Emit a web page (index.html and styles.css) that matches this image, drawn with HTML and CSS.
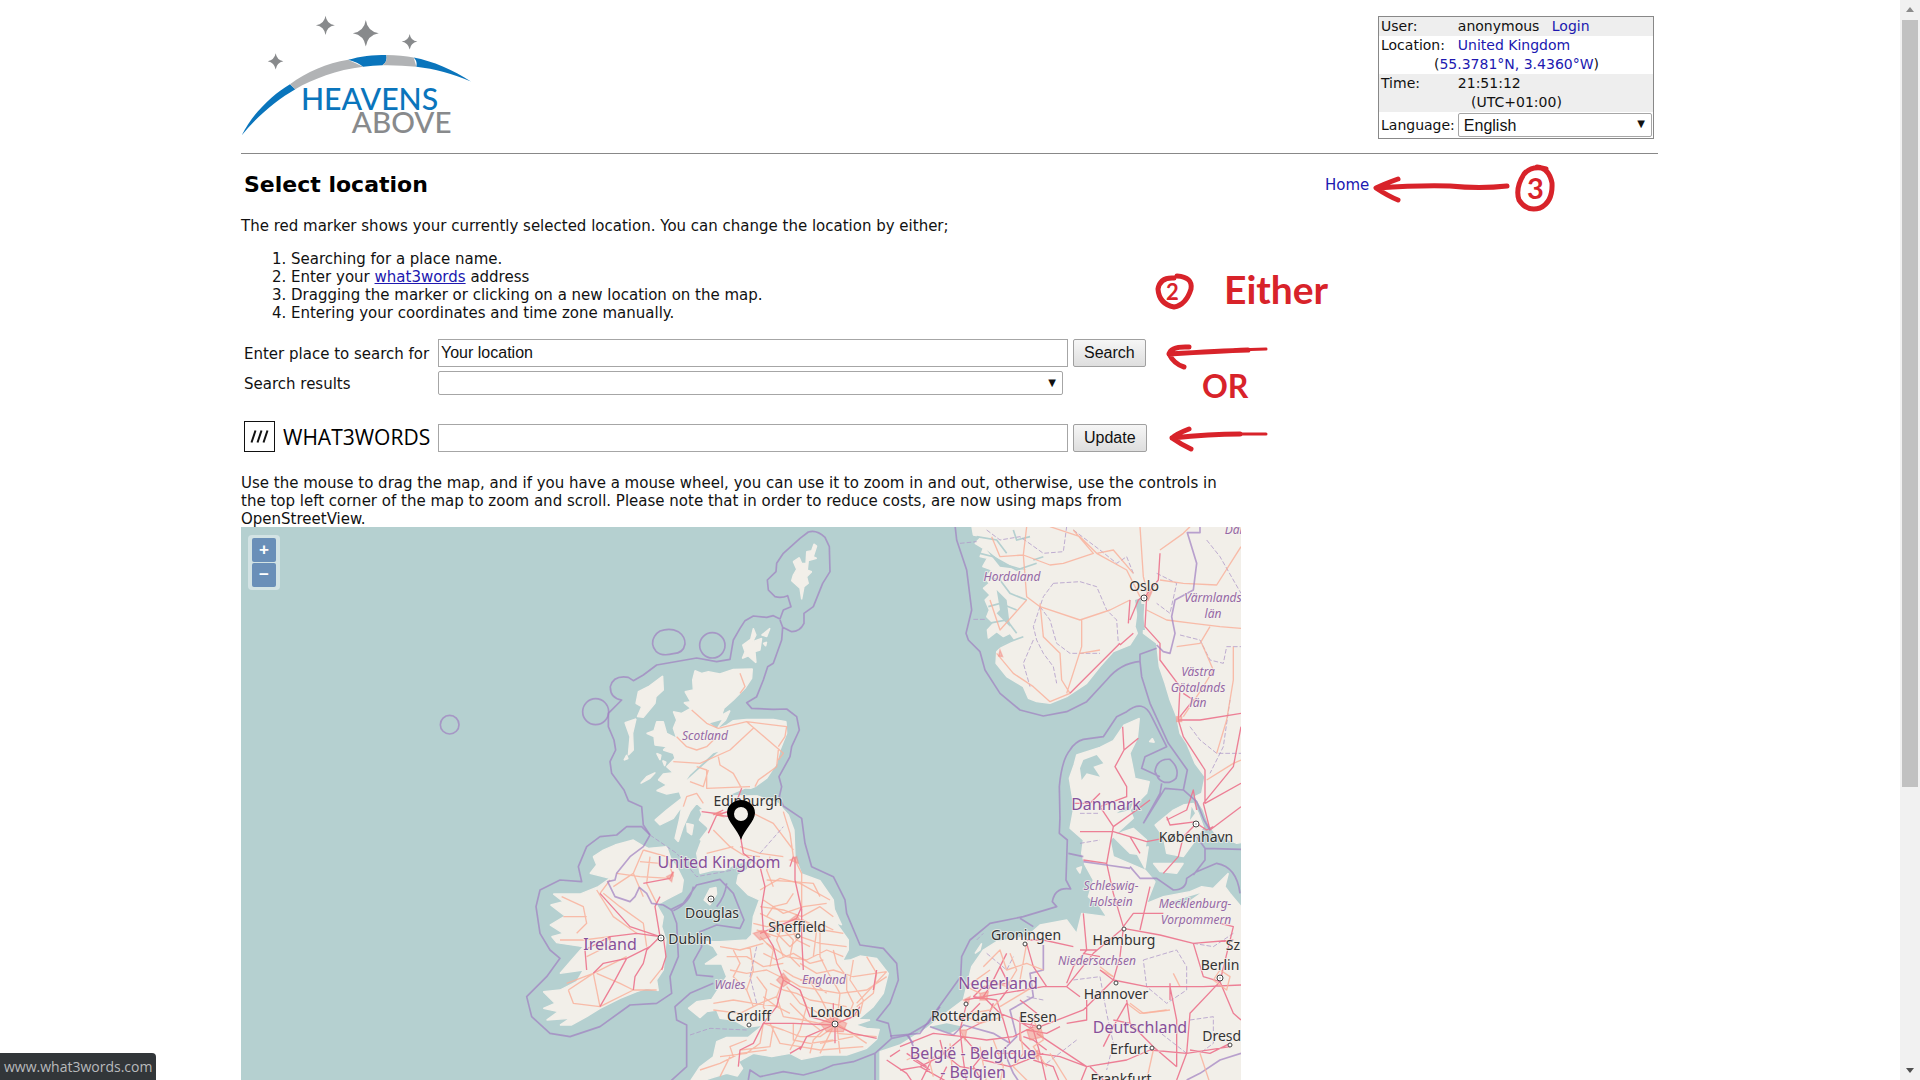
FILE: index.html
```html
<!DOCTYPE html>
<html lang="en">
<head>
<meta charset="utf-8">
<title>Select location - Heavens-Above</title>
<link rel="stylesheet" href="styles.css">
</head>
<body>
<div class="viewport">
<div class="page">
  <header class="header">
    <svg class="logo" viewBox="33 24 700 400" role="img" aria-label="Heavens Above">
      <g fill="#888a8c">
        <path d="M287 47Q290 72 315 76Q290 80 287 105Q283 80 258 76Q283 72 287 47Z"/>
        <path d="M408 60Q413 94 447 100Q413 106 408 140Q403 106 369 100Q403 94 408 60Z"/>
        <path d="M540 102Q543 122 563 125Q543 129 540 149Q536 129 516 125Q536 122 540 102Z"/>
        <path d="M137 160Q140 180 160 184Q140 188 137 209Q133 188 113 184Q133 180 137 160Z"/>
      </g>
      <path fill="#0a75bc" d="M35 407C65 345 125 285 180 253L196 268C140 300 80 350 35 407Z"/>
      <path fill="#b1b3b5" d="M180 253C230 218 290 190 355 180L400 201C320 210 250 238 196 268Z"/>
      <path fill="#0a75bc" d="M355 180C390 168 430 165 470 165Q474 185 458 196Q430 196 400 201Q385 188 355 180Z"/>
      <path fill="#b1b3b5" d="M470 165C500 165 528 168 552 173L560 201Q510 195 458 196Q474 185 470 165Z"/>
      <path fill="#0a75bc" d="M552 173C610 184 670 210 724 245C670 222 615 207 560 201Q564 185 552 173Z"/>
      <text x="213" y="330" font-size="91" fill="#0a75bc">HEAVENS</text>
      <text x="366" y="401" font-size="89" fill="#888a8c">ABOVE</text>
    </svg>
    <table class="info">
      <tr class="shade"><th>User:</th><td>anonymous <a class="login" href="#login">Login</a></td></tr>
      <tr><th>Location:</th><td><a href="#location">United Kingdom</a></td></tr>
      <tr><td class="centre" colspan="2">(<a href="#location">55.3781°N, 3.4360°W</a>)</td></tr>
      <tr class="shade"><th>Time:</th><td>21:51:12</td></tr>
      <tr class="shade"><td class="centre" colspan="2">(UTC+01:00)</td></tr>
      <tr><th><label for="lang">Language:</label></th><td><span class="drop"><select id="lang"><option>English</option></select></span></td></tr>
    </table>
  </header>

  <div class="columns">
    <main class="content">
      <h1>Select location</h1>
      <p class="intro">The red marker shows your currently selected location. You can change the location by either;</p>
      <ol class="ways">
        <li>Searching for a place name.</li>
        <li>Enter your <a href="#w3w">what3words</a> address</li>
        <li>Dragging the marker or clicking on a new location on the map.</li>
        <li>Entering your coordinates and time zone manually.</li>
      </ol>

      <form class="search">
        <label for="place">Enter place to search for</label>
        <input id="place" type="text" value="Your location">
        <button type="button">Search</button>
        <label for="results">Search results</label>
        <span class="drop results"><select id="results"><option></option></select></span>
        <span></span>
        <label class="w3w" for="w3w">
          <svg class="w3w-mark" viewBox="0 0 31 31" aria-hidden="true"><rect x=".5" y=".5" width="30" height="30" fill="#fff" stroke="#111"/><path d="M7.500 21.500L11.500 9.500M13.500 21.500L17.500 9.500M19.500 21.500L23.500 9.500" stroke="#111" stroke-width="2" fill="none"/></svg>
          <span>WHAT3WORDS</span>
        </label>
        <input class="words" id="w3w" type="text">
        <button class="words" type="button">Update</button>
      </form>

      <p class="help">Use the mouse to drag the map, and if you have a mouse wheel, you can use it to zoom in and out, otherwise, use the controls in the top left corner of the map to zoom and scroll. Please note that in order to reduce costs, are now using maps from OpenStreetView.</p>

      <div class="map">
        <svg class="tiles" viewBox="241 527 1000 600" preserveAspectRatio="xMinYMin slice" role="img" aria-label="Map of north west Europe">
          <g transform="translate(500 520) scale(.33333)">
            <!-- Great Britain, north -->
            <g class="land">
              <path d="M585 452L605 460L625 455L660 462L700 448L757 447L755 475L735 505L700 540L672 565L665 585L690 572L677 600L648 628L680 615L700 602L740 598L820 598L858 605L860 640L840 690L830 730L800 775L765 800L735 812L765 825L800 838L835 850L860 880L875 930L600 960L626 925L598 900L612 870L590 850L570 875L550 920L535 965L525 955L538 900L545 860L520 895L480 915L465 900L500 870L545 835L538 815L500 822L470 812L500 795L475 780L490 762L520 758L500 740L525 715L520 700L490 690L500 680L465 675L462 650L440 640L462 632L470 605L490 605L500 640L530 655L520 625L530 600L520 575L545 580L572 565L552 548L572 545L555 515L580 510L578 480Z"/>
              <path d="M488 468L490 510L468 530L465 550L430 592L412 590L425 560L408 550L415 515L445 500Z"/>
              <path d="M375 608L408 597L398 640L400 690L385 705L390 650ZM372 720L380 705L384 716ZM422 790L440 770L466 758L450 775ZM470 700L483 705L480 720ZM488 722L498 726L494 738Z"/>
              <path d="M728 375L752 358L760 325L768 345L758 365L785 355L780 390L765 395L768 428L745 408L727 415L735 395ZM790 370L800 366L797 378ZM785 345L810 325L800 350Z"/>
              <path d="M880 165L890 148L880 125L898 113L905 130L918 130L920 95L935 92L942 72L950 78L940 110L950 115L925 122L922 150L935 155L920 170L925 190L912 200L905 238L900 205L875 182Z"/>
            </g>
            <g class="sea"><path d="M655 695L560 780L550 795L570 765L640 700ZM650 625L630 610L665 600ZM690 825L735 806L770 808L790 825L740 826Z"/></g>
            <g transform="translate(0 810)">
              <g class="land">
                <path d="M600 60L830 40L865 75L882 120L885 200L905 252L960 272L1000 330L1003 358L1025 405L1008 398L1045 450L1045 480L1028 512L1050 510L1080 498L1130 505L1165 550L1150 610L1120 650L1075 688L1110 690L1065 705L1100 715L1138 718L1130 748L1100 775L1040 795L970 795L905 808L870 790L815 800L760 790L715 815L728 835L712 858L680 850L640 862L600 875L570 875L600 830L640 800L650 755L680 742L745 742L790 705L740 712L700 690L660 685L650 660L620 665L600 683L565 655L590 635L635 628L660 590L680 560L665 522L615 522L655 495L640 470L610 455L660 455L740 450L755 435L760 380L778 330L745 315L710 280L715 255L740 240L765 205L700 225L675 240L640 240L600 250L590 190L605 150L630 130Z"/>
                <path d="M400 150L425 165L445 175L500 170L512 205L535 240L550 270L545 305L500 328L470 345L490 380L485 410L498 450L490 540L470 570L475 602L440 595L410 605L360 625L300 655L260 680L215 705L180 705L210 685L140 690L175 665L130 655L165 640L130 605L180 600L230 575L250 540L180 550L215 510L250 470L170 458L155 440L190 430L150 405L195 378L152 345L190 335L160 312L240 312L295 290L330 265L270 250L290 225L280 200L310 180L345 165Z"/>
                <path d="M612 330L630 296L648 292L650 312L630 345ZM560 100L580 105L575 135L562 125Z"/>
              </g>
              <!-- Roads of the British Isles -->
              <g class="minor">
                <path d="M720 -350L735 -310L720 -290M575 -240L620 -200L655 -185L740 -205L850 -110L835 -90M530 -160L560 -130L590 -120L620 -130L650 -160M520 -85L600 -80L690 -120L760 -185M590 -70L620 -60L620 -5L750 -10M655 -100L660 -75L700 -50L725 -5M570 -25L610 -10L625 -60M550 50L560 20L590 10L610 40M835 -120L830 -70L775 -30L765 -10M740 -205L860 -190L855 -160L835 -130"/>
                <path d="M640 120L690 170L730 195L780 200M740 60L820 100L880 180M720 170L780 190L850 200M800 270L880 275L940 280L960 320M790 330L850 370L910 350L980 340M620 190L700 170M850 65L870 130L880 200L905 250L905 360"/>
                <path d="M780 300L840 265L900 280L990 330M780 350L850 360L905 380L960 350L1000 380M780 370L830 395L910 390L970 420L1030 430M830 430L870 470L900 440L960 460L1040 470M800 460L860 500L920 510L980 480L1030 500M660 470L720 480L790 460M680 500L740 500L790 530L850 520M690 540L740 550L800 540L860 570M700 480L720 520L700 560L740 600L760 650M640 640L700 630L760 640L840 650M640 660L720 670L780 640L830 620M850 560L900 590L960 600L1020 610L1100 600L1160 560M900 520L950 550L1000 540L1060 560L1160 545M920 560L960 620L1000 700M980 540L1020 610L1010 700M1060 510L1050 570L1090 630L1080 670L1010 700M1100 500L1130 550L1120 610L1070 650M1160 545L1070 640M850 570L830 620L850 680L910 690L960 700M860 590L900 640L940 660L1000 700M790 700L850 720L900 740L960 740L1010 705M790 700L780 760L740 790L660 800M810 700L840 760L900 770L960 780L1090 770M820 710L810 770L720 780M1005 700L960 790M1010 700L1020 790M1010 700L1100 760M1010 730L1130 740M960 760L1060 740M600 840L660 820L720 790L800 780M660 860L690 800M870 780L900 720L920 650L900 600M770 560L800 600L790 650L810 690M750 470L760 540L740 600M940 500L950 420L910 390M980 610L930 570L900 570M1000 420L960 400L960 500L980 540"/>
                <path d="M430 180L400 250L340 290M430 180L500 200L520 260M350 250L420 260L510 265M420 215L480 220M450 200L440 280L470 340M400 250L430 320M290 300L340 380L410 430M185 320L250 350L260 400L230 430M180 450L250 450L330 440M190 380L260 380M330 270L300 310M330 440L300 480L260 500M205 600L280 550L380 500M205 600L220 640L300 650M280 550L300 650L400 600L470 600M280 550L200 580M400 600L360 580L290 550M440 470L430 400L360 350L310 310M450 580L490 530"/>
                <path d="M810 200L800 240L820 290M870 400L890 450L930 470M850 400L830 450L850 500M760 400L800 410L880 400M770 420L830 440L900 430M780 440L820 480L810 530"/>
                <path d="M800 380L820 350L860 340L880 310M820 410L850 420L880 450L870 500L900 530M790 490L830 510L880 490L930 520L970 510M850 540L880 560L930 580L960 560M810 580L850 600L890 610L930 630L990 640L1040 650M870 640L920 690L960 720M880 700L880 750L930 760L1000 750M1040 600L1060 640L1040 690M930 790L940 750L970 720M1000 480L1010 520L1040 560L1040 600M790 620L830 650L870 670M700 800L690 770L740 750"/>
              </g>
              <g class="major">
                <path d="M605 65L660 72L700 60L725 -5M625 130L650 75L690 80L720 130L730 190L780 230L795 290L785 350L790 420L820 470L835 530L850 570L900 600L930 680L1000 700M850 570L830 650L790 700L760 760L720 780L715 830M885 200L885 270L905 360L905 440L910 540M780 430L830 410L890 385L905 350M640 75L670 60M410 430L330 440L330 470M410 430L480 440M480 440L465 350L480 320M480 440L390 410L300 310M480 440L440 480L430 520L405 560L400 600M300 650L340 580L380 505L450 470M380 505L310 520L280 550M260 540L255 480L330 440M430 280L510 265L520 245M490 440L498 500L485 540M790 700L880 700L1000 705M900 780L920 740L1000 705M1005 705L1005 760M1005 705L1060 730L1130 745M870 790L905 770M1000 700L1000 640M1120 600L1130 540M880 200L870 230M1010 700L1060 680L1080 650"/>
              </g>
              <g class="towns">
                <path d="M760 430L790 420L810 440L780 450ZM830 570L850 550L870 575L850 590ZM960 700L1000 680L1040 700L1030 725L980 725ZM870 390L890 375L900 390ZM870 210L890 200L895 220ZM500 260L520 250L515 275ZM640 72L660 65L670 80Z"/>
              </g>
            </g>
          </g>

          <g transform="translate(900 520) scale(.33333)">
            <!-- Scandinavia -->
            <g class="land">
              <path d="M215 15L220 45L245 50L225 70L250 85L240 110L262 115L248 140L275 150L255 175L268 190L250 205L270 225L255 240L268 270L260 290L280 310L262 330L265 355L290 335L310 350L330 340L345 360L310 375L290 395L288 430L320 470L370 500L385 535L410 545L450 550L500 530L560 490L600 440L640 395L690 375L712 340L705 320L712 270L705 250L735 250L730 340L770 370L778 440L795 490L810 540L830 590L840 640L860 670L885 730L915 770L905 820L885 830L910 870L925 910L945 940L1010 970L1040 965V15Z"/>
              <path d="M522 735L530 705L600 682L640 662L672 615L718 595L712 655L690 700L705 775L748 785L740 820L690 870L700 895L655 935L630 960L640 1010L700 1035L735 1050L765 1085L740 1150L790 1130L870 1115L905 1100L940 1105L985 1060L975 1100L990 1120L1040 1180V1700H-60V1595L0 1575L80 1525L150 1470L190 1440L215 1340L250 1290L290 1265L380 1250L420 1215L500 1200L530 1240L545 1180L620 1190L600 1160L565 1130L580 1080L555 1035L545 1000L550 960L510 925L522 860L508 775Z"/>
              <path d="M640 950L670 935L700 925L740 960L730 1005L690 1000ZM765 915L820 870L850 855L880 850L895 880L910 920L890 955L850 1010L800 1000L790 950ZM760 1030L850 1030L830 1060L780 1055ZM748 665L757 655L763 667ZM705 990L745 980L735 1045ZM225 1300L245 1270L240 1290ZM530 1045L545 1040L540 1060Z"/>
            </g>
            <g class="sea">
              <path d="M550 720L590 705L610 730L580 740L600 770L560 760L545 780L540 745ZM720 330L705 240L722 235L735 330ZM290 280L330 320L320 240L290 210L300 270ZM260 90L310 130L380 150L300 140ZM280 1170H530L480 1185L400 1200ZM90 1520L150 1540L190 1520L140 1510ZM650 880L700 845L690 870ZM800 1150L900 1120L850 1155ZM875 860L885 880L870 900Z"/>
            </g>
            <path class="fjords" d="M230 50L290 60L320 100M240 100L280 110L350 150L410 130M255 170L300 180L330 220L380 240M265 260L300 250L350 270M265 310L320 300L350 340M290 385L330 365L370 350M340 30L350 60L390 50M400 120L430 110"/>
            <g class="admin">
              <path d="M260 30L300 60L360 50L430 100L490 95L500 20M460 190L540 185L590 200L620 270L650 300L655 370M460 190L430 230L400 320L410 360L430 400L460 440L470 490M420 260L450 300L470 370L510 400L600 400M520 30L600 90L650 130L680 110L700 160M400 360L370 430L390 500M770 160L830 190L810 280L770 250M840 345L900 360L930 420L970 430L980 380L1023 380M870 620L900 660L950 700L1023 700M920 60L960 110L1000 180L1023 220M990 540L970 680L930 760M540 880L600 880M230 1260L250 1240M540 970L600 960M430 1440L380 1430M730 1320L830 1290L860 1340L860 1410L800 1450L740 1400ZM520 1380L600 1370L620 1480L640 1570L620 1650M870 1500L940 1490L940 1570L900 1600M440 1630L530 1560M770 1530L860 1600M260 1300L320 1350L340 1310M880 1270L940 1280L1000 1240M180 70L230 65M220 298H260"/>
            </g>
            <g class="minor">
              <path d="M275 50L300 110L370 105L450 135L490 130L580 100L520 30M370 105L380 20M370 105L380 230L420 260L540 300L630 270L690 240M450 20L540 50L590 100L680 150L720 230M545 300L545 380L500 520M420 250L430 350L480 400L485 480L510 520M290 400L340 460L400 500L450 545L510 520M270 240L300 330L380 240M590 100L640 90L700 160M720 20L730 170L745 230M780 90L850 40L870 20M780 180L850 190L950 195L1023 80M740 270L800 300L880 310L960 320L1023 325M905 370L940 450L910 500L850 590M930 320L900 370L830 380M1000 380L1000 480L980 600L950 700M540 400L600 390M920 780L1000 730L1023 720M600 1350L640 1370M680 1450L720 1480L800 1470M820 1360L840 1400"/>
            </g>
            <g class="major">
              <path d="M735 230L775 180L780 100M740 230L735 320L780 370L780 420L840 500L835 600L850 650L915 750L915 850L1023 790M690 300L715 240L735 225M660 375L700 340M685 310L690 240M835 600L900 600L1023 580M840 590L880 540L850 520M910 850L930 930L1023 860M1023 620L1000 740L910 850M510 520L600 430L660 370M890 870L880 810L860 870L800 900M668 620L672 690L645 740L680 800L680 830L600 860L640 920L620 1030L550 1020M672 690L715 655M600 820L570 850L520 850M540 935L640 935L740 965L790 955M640 920L710 870L750 840M620 1030L640 1120L670 1220M640 935L690 950L720 1000M890 910L850 950L835 1010L790 1060M890 910L920 930L940 920M890 905L810 915L800 890"/>
            </g>
            <path class="border" d="M900 20V38H862L890 130L880 210L825 240L815 290L825 340L810 400L790 395L770 375M550 1025L620 1035L690 1045M430 1275L430 1350L390 1360L400 1430L330 1470L350 1550L310 1590L340 1660L360 1690M90 1520L160 1545L190 1515L280 1540L330 1570M1023 1600L960 1620L900 1660L860 1680"/>
            <!-- Roads of Germany and the Low Countries -->
            <g class="major">
              <path d="M670 1225L580 1300L500 1400L430 1400L250 1430L195 1440M670 1225L780 1245L880 1270L910 1370L960 1385M670 1225L660 1310L640 1380L740 1400L910 1400L1023 1395M640 1380L590 1430L550 1470L420 1520L370 1510M560 1440L560 1500L500 1510M680 1440L690 1510L750 1570L760 1580L830 1640M640 1380L600 1350M680 1450L640 1520L610 1580M960 1385L870 1480L860 1600L830 1680M960 1385L1000 1480L1023 1500M960 1385L1000 1220L960 1210M550 1180L560 1290L520 1340L500 1390M520 1280L430 1260L380 1260M380 1270L400 1340L440 1400M320 1300L270 1400L250 1430L300 1480L350 1500L400 1530L420 1600L440 1690M200 1450L180 1530L190 1620L200 1690M190 1550L100 1540L0 1580M190 1550L260 1560L340 1550L400 1520M190 1550L120 1610L60 1640M190 1550L250 1620L330 1640L430 1600M80 1640L20 1600M0 1650L60 1640L150 1690M100 1610L60 1690M330 1570L310 1500L290 1440L220 1430M390 1520L410 1480L360 1440M410 1600L480 1610L560 1640L540 1690M410 1540L500 1600L560 1640L680 1620L750 1590L860 1600L990 1580M830 1640L830 1500L810 1400M720 1230L750 1100M670 1220L700 1180L790 1180M810 1390V1440M500 1400L540 1430M880 1270L1000 1260M590 1290L540 1290M550 1300L600 1310M990 1570L930 1600L870 1590M570 1640L620 1690M690 1510L640 1500"/>
              <path d="M300 1340L330 1400L300 1440M220 1430L250 1400L320 1390M240 1450L200 1490L170 1500M280 1450L260 1500L200 1530M360 1490L360 1560L400 1600M380 1530L440 1540L480 1520M370 1550L400 1560L440 1590M120 1560L130 1600L180 1640L240 1650M140 1640L120 1680M260 1590L220 1640L250 1690M290 1600L350 1600M400 1620L460 1640L480 1690M40 1620L90 1650M-40 1620L20 1660L40 1690M-30 1610L0 1590"/>
            </g>
            <g class="minor">
              <path d="M250 1340L300 1290L320 1350L380 1330L430 1350M260 1380L320 1400L350 1350L330 1300M300 1460L350 1430L400 1400M210 1480L270 1470L300 1440M380 1270L360 1380M20 1620L80 1590L100 1670M150 1570L160 1690M240 1580L260 1690M280 1560L310 1640L300 1690M360 1530L370 1600L340 1640L390 1690M400 1500L430 1560L400 1580L440 1640M180 1480L240 1510L310 1490M690 1450L730 1480L810 1470M600 1340L640 1370M900 1600L930 1690M450 1600L500 1680M760 1590L740 1680M940 1380L960 1350L990 1370L980 1410ZM240 1420L200 1400L270 1350"/>
            </g>
            <g class="towns"><path d="M380 1530L420 1515L430 1550L390 1560ZM240 1420L265 1415L260 1440L240 1440ZM180 1530L200 1530L195 1560ZM395 1600L415 1590L415 1620ZM725 230L745 225L760 205L745 240ZM830 590L845 590L845 605L830 605ZM300 390L308 410L296 408ZM190 1440L210 1430L205 1450Z"/></g>
          </g>

          <!-- Territorial waters and borders -->
          <g class="border" transform="translate(500 520) scale(.33333)">
            <circle cx="-151" cy="614" r="28"/><circle cx="287" cy="575" r="39"/><circle cx="637" cy="376" r="38"/>
            <path d="M480 333Q510 322 535 335Q556 350 555 372Q550 400 520 401Q485 410 468 394Q450 372 463 350Q468 340 480 333Z"/>
            <path d="M450 945L430 915L425 860L385 842L372 810L335 760L330 725L347 690L342 660L325 620L325 580L365 540Q330 535 331 500Q340 465 385 472L400 482L430 465L470 435L590 414L650 425L690 418L700 360L720 325L735 302L760 288L800 292L820 287L840 297L850 270L873 260L863 227Q845 235 825 230L805 210L802 180L828 155L830 130L850 100L900 55L925 36Q950 28 975 52L988 80L990 155L968 190L940 260L912 280L912 310Q900 335 875 335L848 322L840 300M848 322L845 360L820 430L803 440L790 480L770 530L740 548L755 565L820 568L860 567L890 590L898 630L875 680L870 710L837 770L845 800L838 830L850 858L905 895L915 970L935 1040L1000 1070L1035 1140L1040 1180L1080 1275L1150 1285L1190 1330L1195 1380L1170 1450L1130 1500L1165 1510L1175 1555L1225 1545L1285 1510L1320 1460M1225 1545L1240 1580M1175 1555L1125 1600L1060 1625L1000 1635L965 1650L910 1665L850 1655L780 1670L750 1650L745 1680M1125 1600V1680"/>
            <path d="M450 945L425 920L380 920L350 945L300 950L260 980L235 1040L245 1085L180 1080L120 1110L108 1160L120 1240L150 1290L180 1315L140 1370L80 1430L95 1490L150 1540L210 1550L300 1520L390 1455L470 1450L515 1420L510 1370L535 1310L530 1210L515 1170L490 1155L455 1150L440 1120L418 1102L405 1130L390 1145L345 1130L323 1085L345 1080L350 1060L390 1010L430 980L450 945M510 1170L550 1150L590 1095L660 1078L700 1120L732 1200L720 1225L650 1215L600 1235L605 1280L580 1325L590 1365L640 1370M640 1390L570 1420L525 1460L530 1500L560 1515L560 1640L510 1685M680 1090Q675 1130 650 1160M580 1100Q570 1150 520 1172"/>
            <path class="admin" d="M570 1545L630 1525L740 1530M780 1000L850 920M450 945L530 1000L590 1070L700 1050M770 1280L750 1370L770 1450"/>
          </g>
          <g class="border" transform="translate(900 520) scale(.33333)">
            <path d="M165 15L170 60L200 150L215 270L198 340L205 360L240 395L255 450L300 520L360 570L430 588L500 575L560 545L620 480Q660 430 720 424V403L770 385M720 424L725 470L750 550L805 670L862 750L850 810L890 845L912 900L930 930M480 900L478 800Q485 720 510 690Q525 665 550 658L610 650L650 590L680 575Q730 535 755 590L770 620L800 680L735 710L725 745L780 770M765 755Q770 715 810 718Q840 745 828 775Q800 800 775 775ZM785 790L780 820L730 910M730 910L795 805L850 810M480 890L478 940L502 960L498 1080L512 1107Q465 1100 457 1145L470 1160L370 1190L270 1210L210 1260L185 1310L182 1370L110 1470L60 1540L-30 1548M20 1545L40 1570M360 1195L400 1220M505 1000L550 1010M690 1040L720 1075L770 1075L820 1110Q860 1110 860 1075L890 1055L950 1030Q1010 1040 1020 1120M890 950L915 985L1023 988M915 985V1020L880 1065"/>
          </g>
          <g class="place-dots">
            <circle cx="1144" cy="598" r="3"/><circle cx="711" cy="899" r="3"/><circle cx="661" cy="938" r="3"/><circle cx="835" cy="1024" r="3"/><circle cx="1196" cy="824" r="3"/><circle cx="1220" cy="978" r="3"/>
            <circle cx="798" cy="936" r="2"/><circle cx="749" cy="1025" r="2"/><circle cx="1025" cy="944" r="2"/><circle cx="966" cy="1004" r="2"/><circle cx="1039" cy="1027" r="2"/><circle cx="1116" cy="983" r="2"/><circle cx="1124" cy="929" r="2"/><circle cx="1152" cy="1048" r="2"/><circle cx="1230" cy="1045" r="2"/>
            <path d="M1143.500 598h1M710.500 899h1M660.500 938h1M834.500 1024h1M1195.500 824h1M1219.500 978h1"/>
          </g>
          <g class="city">
            <text x="748" y="806">Edinburgh</text><text x="712" y="918">Douglas</text><text x="690" y="944">Dublin</text><text x="797" y="932">Sheffield</text><text x="749" y="1021">Cardiff</text><text x="835" y="1017">London</text>
            <text x="1144" y="591">Oslo</text><text x="1196" y="842">København</text><text x="1026" y="940">Groningen</text><text x="1124" y="945">Hamburg</text><text x="1233" y="950">Sz</text><text x="1220" y="970">Berlin</text><text x="1116" y="999">Hannover</text><text x="966" y="1021">Rotterdam</text><text x="1038" y="1022">Essen</text><text x="1129" y="1054">Erfurt</text><text x="1230" y="1041">Dresden</text><text x="1121" y="1084">Frankfurt</text>
          </g>
          <g class="country">
            <text x="719" y="868">United Kingdom</text><text x="610" y="950">Ireland</text><text x="1106" y="810">Danmark</text><text x="998" y="989">Nederland</text><text x="1140" y="1033">Deutschland</text><text x="973" y="1059">België - Belgique</text><text x="973" y="1078">- Belgien</text>
          </g>
          <g class="region">
            <text x="705" y="740">Scotland</text><text x="824" y="984">England</text><text x="730" y="989">Wales</text><text x="1012" y="581">Hordaland</text><text x="1249" y="534">Dalarnas</text><text x="1213" y="602">Värmlands</text><text x="1213" y="618">län</text><text x="1198" y="676">Västra</text><text x="1198" y="692">Götalands</text><text x="1198" y="707">län</text><text x="1111" y="890">Schleswig-</text><text x="1111" y="906">Holstein</text><text x="1195" y="908">Mecklenburg-</text><text x="1196" y="924">Vorpommern</text><text x="1097" y="965">Niedersachsen</text>
          </g>
          <path class="pin" fill-rule="evenodd" d="M741 840C738 830 727 821 727 813A14 13 0 0 1 755 813C755 821 744 830 741 840ZM741 807A7 7 0 1 0 741 821A7 7 0 1 0 741 807Z"/>
        </svg>
        <div class="zoom"><button type="button" aria-label="Zoom in">+</button><button type="button" aria-label="Zoom out">−</button></div>
      </div>
    </main>
    <nav class="side"><a href="#home">Home</a></nav>
  </div>

  <svg class="notes" viewBox="0 0 440 310" role="img" aria-label="Handwritten notes">
    <g class="ink">
      <path d="M258 29Q244 34 236 38Q248 46 258 50M237 38Q280 35 310 36Q340 39 367 36"/>
      <path d="M406 19Q392 15 384 24Q375 38 379 50Q387 62 400 58Q413 52 412 33Q409 18 397 17"/>
      <path d="M34 128Q20 127 18 139Q19 154 34 157Q46 155 51 139Q53 127 37 126"/>
      <path d="M49 197Q31 196 29 204Q34 214 44 217M29 204Q80 201 108 200"/>
      <path d="M49 279Q36 284 32 288Q42 295 51 299M32 288Q70 284 100 284"/>
      <path class="tail" d="M95 200L126 199M90 284H126"/>
    </g>
    <text x="387" y="49" font-size="29">3</text>
    <text x="26" y="150" font-size="22">2</text>
    <text x="84" y="154" font-size="39">Either</text>
    <text x="62" y="248" font-size="32">OR</text>
  </svg>
</div>
</div>
<div class="status">www.what3words.com</div>
<div class="scrollbar" aria-hidden="true"><svg viewBox="0 0 20 20"><path d="M10 7L14 12H6Z"/></svg><div class="thumb"></div><svg class="down" viewBox="0 0 20 20"><path d="M10 13L14 8H6Z"/></svg></div>
</body>
</html>
```
FILE: styles.css
```css
* { box-sizing: border-box; }
body { margin: 0; background: #fff; color: #111; font: 15px/18px Verdana, "DejaVu Sans", sans-serif; }
a { color: #2018b0; text-decoration: none; }
h1, p, ol { margin: 0; }

.viewport { height: 100vh; overflow: hidden; padding-right: 21px; }
.page { position: relative; max-width: 1417px; margin: 0 auto; }

.header { display: flex; justify-content: space-between; align-items: flex-start; height: 154px; padding: 8px 4px 0 0; border-bottom: 1px solid #888; }
.logo { width: 233px; height: 133px; font-family: Lato, sans-serif; font-weight: 500; }

.info { width: 276px; margin-top: 8px; border: 1px solid #888; border-collapse: separate; border-spacing: 0; line-height: 19px; font-size: 14px; }
.info th, .info td { padding: 0 1px 0 2px; font-weight: normal; text-align: left; white-space: nowrap; }
.info th { width: 76px; }
.info .centre { text-align: center; }
.info .login { margin-left: 8px; }
.shade { background: #eee; }

.drop { position: relative; display: block; }
.drop::after { content: "▼"; position: absolute; right: 7px; top: 0; font-size: 10px; line-height: 24px; pointer-events: none; }
.drop select { display: block; width: 100%; height: 24px; padding: 0 5px; border: 1px solid #a6a6a6; border-radius: 2px; background: #fff; color: #111; font: 16px "Liberation Sans", Arial, sans-serif; appearance: none; }
.info .drop { padding: 1px 0; }

.columns { display: flex; gap: 84px; }
.content { flex: 0 1 1000px; }
.side { padding-top: 22px; }

h1 { padding: 17px 3px 0; font-size: 22px; line-height: 28px; color: #000; }
.intro { margin-top: 18px; }
.ways { margin: 15px 0 17px; padding-left: 50px; }
.ways a { text-decoration: underline; }

.search { display: grid; grid-template-columns: 189px 630px auto; justify-content: start; align-items: center; column-gap: 5px; row-gap: 4px; padding-left: 3px; }
.search label { padding-top: 2px; white-space: nowrap; }
.search input { height: 28px; padding: 0 2px; border: 1px solid #a6a6a6; color: #111; font: 16px "Liberation Sans", Arial, sans-serif; }
.search button { height: 28px; padding: 0 10px; border: 1px solid #a0a0a0; border-radius: 2px; background: linear-gradient(#f6f6f6, #dedede); color: #111; font: 16px "Liberation Sans", Arial, sans-serif; justify-self: start; }
.results { width: 625px; }
.search .w3w { display: flex; align-items: center; gap: 8px; margin-top: 22px; padding: 0; font: 21px/28px "Open Sans", sans-serif; color: #000; }
.w3w-mark { width: 31px; height: 31px; flex: none; }
.search .words { margin-top: 24px; }

.help { margin: 22px 0 -1px; }
.map { position: relative; height: 600px; background: #b5d0d0; overflow: hidden; }
.tiles { display: block; width: 100%; height: 600px; font-family: "Noto Sans", sans-serif; text-anchor: middle; }
.land { fill: #f2efe9; stroke: #f2efe9; stroke-width: 4; stroke-linejoin: bevel; }
.sea { fill: #b5d0d0; }
.fjords { fill: none; stroke: #b5d0d0; stroke-width: 5; }
.border { fill: none; stroke: #a07fc0; stroke-width: 5; stroke-linejoin: round; stroke-opacity: .7; }
.admin { fill: none; stroke: #b09bc9; stroke-width: 3; stroke-dasharray: 14 6; stroke-opacity: .8; }
.minor { fill: none; stroke: #f9b29c; stroke-width: 4; stroke-linejoin: round; stroke-opacity: .85; }
.major { fill: none; stroke: #ec7890; stroke-width: 4; stroke-linejoin: round; stroke-opacity: .95; }
.towns { fill: #f58e85; stroke: #f58e85; stroke-width: 4; stroke-opacity: .5; fill-opacity: .5; }
.place-dots { fill: #fff; stroke: #444; }
.city, .country, .region { paint-order: stroke; stroke: #f5f2ee; stroke-width: 2px; stroke-opacity: .7; stroke-linejoin: round; }
.city { fill: #333; font-size: 14px; }
.country { fill: #87509a; font-size: 16px; }
.region { fill: #9568a5; font-size: 12px; font-style: italic; }
.pin { fill: #000; }

.zoom { position: absolute; left: 7px; top: 8px; display: grid; gap: 1px; padding: 3px 4px; border-radius: 4px; background: #d3e3e4; }
.zoom button { width: 24px; height: 24px; padding: 0; border: 0; border-radius: 2px; background: #6a8fb8; color: #fff; font: bold 17px/22px "Liberation Sans", Arial, sans-serif; }

.notes { position: absolute; left: 899px; top: 150px; width: 440px; height: 310px; pointer-events: none; fill: #d8232a; font-family: Lato, sans-serif; font-weight: bold; }
.ink { fill: none; stroke: #d8232a; stroke-width: 5; stroke-linecap: round; stroke-linejoin: round; }
.ink .tail { stroke-width: 3; }

.status { position: fixed; left: 0; bottom: 0; padding: 3px 4px; border-radius: 0 4px 0 0; background: #323639; color: #b8babc; font: 14px/21px "Open Sans", sans-serif; }
.scrollbar { position: fixed; top: 0; right: 0; bottom: 0; width: 20px; display: flex; flex-direction: column; background: #f1f1f1; }
.scrollbar svg { width: 20px; height: 20px; flex: none; fill: #8b8b8b; }
.scrollbar .down { margin-top: auto; fill: #505050; }
.thumb { height: 71%; margin: 0 2px; background: #c1c1c1; }
```
